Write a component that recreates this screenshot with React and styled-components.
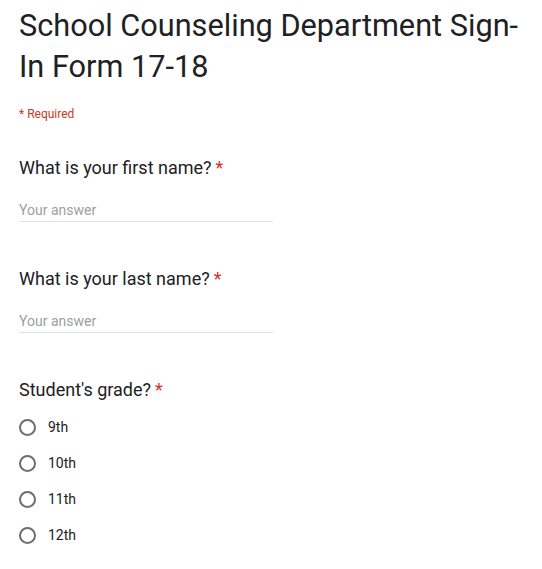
import React from "react";
import styled, { createGlobalStyle } from "styled-components";

const Global = createGlobalStyle`
  html, body { margin: 0; padding: 0; background: #ffffff; }
  body { font-family: Roboto, "Noto Sans", Arial, sans-serif; color: #202124; }
`;

const Page = styled.div`
  padding: 5px 19px 0 19px;
  display: flex;
  flex-direction: column;
`;

const Title = styled.h1`
  margin: 0;
  font-size: 30.7px;
  line-height: 41px;
  font-weight: 400;
  color: #202124;
  width: 510px;
`;

const RequiredNote = styled.div`
  margin-top: 19px;
  font-size: 12px;
  line-height: 16px;
  color: #c53929;
`;

const Question = styled.div`
  display: flex;
  flex-direction: column;
  margin-top: ${(p) => p.$top}px;
`;

const Label = styled.div`
  font-size: 18px;
  line-height: 24px;
  color: #202124;
`;

const Star = styled.span`
  color: #d93025;
  margin-left: 4px;
`;

const Input = styled.input`
  margin-top: 21px;
  width: 254px;
  box-sizing: border-box;
  border: none;
  border-bottom: 1px solid #e0e0e0;
  padding: 0 0 2px 0;
  font-family: Roboto, Arial, sans-serif;
  font-size: 14px;
  line-height: 18px;
  outline: none;
  color: #202124;
  background: transparent;
  &::placeholder { color: #9aa0a6; }
`;

const Options = styled.div`
  display: flex;
  flex-direction: column;
  margin-top: 15px;
  gap: 16px;
`;

const Option = styled.label`
  display: flex;
  align-items: center;
  height: 20px;
  font-size: 14px;
  color: #202124;
  cursor: pointer;
`;

const Radio = styled.span`
  width: 17px;
  height: 17px;
  box-sizing: border-box;
  border: 2px solid #6d6d6d;
  border-radius: 50%;
  margin-right: 12px;
  flex: none;
`;

export default function App() {
  return (
    <>
      <Global />
      <Page>
        <Title>School Counseling Department Sign-In Form 17-18</Title>
        <RequiredNote>* Required</RequiredNote>
        <Question $top={34}>
          <Label>What is your first name?<Star>*</Star></Label>
          <Input placeholder="Your answer" />
        </Question>
        <Question $top={45}>
          <Label>What is your last name?<Star>*</Star></Label>
          <Input placeholder="Your answer" />
        </Question>
        <Question $top={45}>
          <Label>Student's grade?<Star>*</Star></Label>
          <Options>
            {["9th", "10th", "11th", "12th"].map((g) => (
              <Option key={g}>
                <Radio />
                {g}
              </Option>
            ))}
          </Options>
        </Question>
      </Page>
    </>
  );
}
